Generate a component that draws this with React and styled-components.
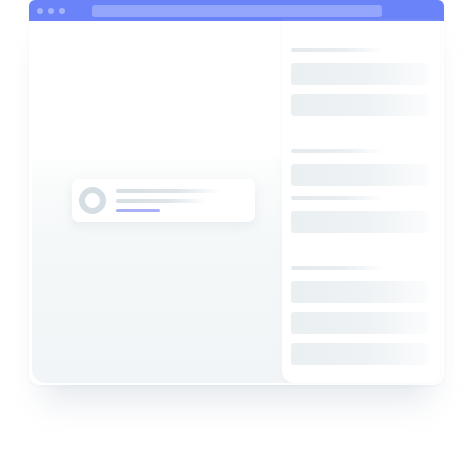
import React from 'react'
import styled, { createGlobalStyle } from 'styled-components'

const Global = createGlobalStyle`
  html, body { margin: 0; padding: 0; background: #fff; }
  body { font-family: "Liberation Sans", Arial, sans-serif; }
`

const Stage = styled.div`
  width: 474px;
  height: 454px;
  box-sizing: border-box;
  padding-left: 29px;
  background: #fff;
`

const Window = styled.div`
  width: 415px;
  display: flex;
  flex-direction: column;
  border-radius: 6px 6px 10px 10px;
  background: #fff;
  box-shadow: 0 30px 30px -14px rgba(175, 188, 202, 0.32), 0 1px 4px rgba(215, 222, 230, 0.2);
`

const TitleBar = styled.div`
  height: 21px;
  display: flex;
  align-items: center;
  padding-left: 8px;
  background: #6a83f8;
  border-radius: 6px 6px 0 0;
`

const Dot = styled.span`
  width: 6px;
  height: 6px;
  border-radius: 50%;
  background: #a4b3fb;
  margin-right: 5px;
`

const Address = styled.div`
  width: 290px;
  height: 12px;
  margin-left: 22px;
  border-radius: 3px;
  background: #93a6fb;
`

const Body = styled.div`
  height: 364px;
  display: flex;
  padding: 0 4px 2px 3px;
  box-sizing: border-box;
`

const Canvas = styled.div`
  flex: 1;
  display: flex;
  flex-direction: column;
  padding-top: 138px;
`

const Surface = styled.div`
  flex: 1;
  margin-right: -12px;
  padding: 20px 0 0 40px;
  border-radius: 0 0 0 14px;
  background: linear-gradient(180deg, #fcfdfd 0%, #f5f8f9 35%, #f1f5f7 100%);
`

const Card = styled.div`
  width: 183px;
  height: 43px;
  box-sizing: border-box;
  display: flex;
  align-items: center;
  gap: 10px;
  padding-left: 7px;
  border-radius: 7px;
  background: #fff;
  box-shadow: 0 4px 12px rgba(150, 165, 180, 0.16);
`

const Ring = styled.div`
  width: 27px;
  height: 27px;
  box-sizing: border-box;
  border-radius: 50%;
  border: 6px solid #d4dee3;
`

const Lines = styled.div`
  display: flex;
  flex-direction: column;
  gap: 6px;
`

const Line = styled.div`
  width: ${({ w }) => w}px;
  height: ${({ h }) => h || 4}px;
  border-radius: 2px;
  background: ${({ accent }) => accent ? '#a9b1f6' : 'linear-gradient(90deg, #d6dfe4 0%, #dfe6ea 60%, rgba(232,238,241,0) 100%)'};
`

const Panel = styled.div`
  width: 158px;
  position: relative;
  z-index: 1;
  display: flex;
  flex-direction: column;
  padding: 27px 0 0 9px;
  box-sizing: border-box;
  background: #fff;
  border-radius: 0 0 10px 12px;
  box-shadow: 0 0 4px rgba(215, 222, 230, 0.25);
`

const Label = styled.div`
  width: 95px;
  height: 4px;
  border-radius: 2px;
  margin-top: ${({ top }) => top || 0}px;
  margin-bottom: 11px;
  background: linear-gradient(90deg, #e3e9ed 0%, #e9eef1 55%, rgba(240,244,246,0) 100%);
`

const Bar = styled.div`
  width: 137px;
  height: 22px;
  border-radius: 3px;
  margin-bottom: ${({ gap }) => gap ?? 9}px;
  background: linear-gradient(90deg, #eaeff2 0%, #eef2f4 55%, rgba(248,250,251,0.6) 100%);
`

export default function App () {
  return (
    <Stage>
      <Global />
      <Window>
        <TitleBar>
          <Dot /><Dot /><Dot />
          <Address />
        </TitleBar>
        <Body>
          <Canvas>
            <Surface>
              <Card>
                <Ring />
                <Lines>
                  <Line w={105} />
                  <Line w={90} />
                  <Line w={44} h={3} accent />
                </Lines>
              </Card>
            </Surface>
          </Canvas>
          <Panel>
            <Label />
            <Bar />
            <Bar gap={0} />
            <Label top={33} />
            <Bar gap={10} />
            <Label />
            <Bar gap={0} />
            <Label top={33} />
            <Bar />
            <Bar />
            <Bar gap={0} />
          </Panel>
        </Body>
      </Window>
    </Stage>
  )
}
